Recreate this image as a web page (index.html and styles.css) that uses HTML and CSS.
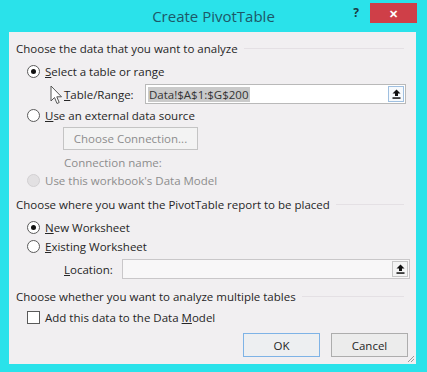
FILE: index.html
```html
<html lang="en">
<head>
  <meta charset="UTF-8" />
  <title>Create PivotTable</title>
  <link rel="stylesheet" href="styles.css">
</head>
<body>
  <div class="titlebar">
    <div></div>
    <div class="title">Create PivotTable</div>
    <div class="title-tools">
      <span class="help">?</span>
      <span class="close">&#x2715;</span>
    </div>
  </div>

  <div class="panel">
    <div class="group-label row-l1">Choose the data that you want to analyze</div>

    <div class="row radio-row r-select">
      <span class="radio checked"></span><span><u>S</u>elect a table or range</span>
    </div>
    <div class="row indent r-range">
      <span class="field-label"><u>T</u>able/Range:</span>
      <div class="field field-range">
        <span class="selected-text">Data!$A$1:$G$200</span>
        <span class="pick pick-hover"><svg width="9" height="10" viewBox="0 0 9 10"><path d="M4.5 0.5 L8.5 4.5 L6 4.5 L6 7 L3 7 L3 4.5 L0.5 4.5 Z" fill="#111"/><rect x="0.5" y="8.3" width="8" height="1.5" fill="#111"/></svg></span>
      </div>
    </div>
    <div class="row radio-row r-external">
      <span class="radio"></span><span><u>U</u>se an external data source</span>
    </div>
    <div class="row indent r-conn">
      <div class="btn btn-disabled">Choose Connection...</div>
    </div>
    <div class="row indent disabled r-connname">Connection name:</div>
    <div class="row radio-row disabled r-model">
      <span class="radio radio-disabled"></span><span>Use this workbook's Data Model</span>
    </div>

    <div class="group-label row-l2">Choose where you want the PivotTable report to be placed</div>

    <div class="row radio-row r-new">
      <span class="radio checked"></span><span><u>N</u>ew Worksheet</span>
    </div>
    <div class="row radio-row r-existing">
      <span class="radio"></span><span><u>E</u>xisting Worksheet</span>
    </div>
    <div class="row indent r-location">
      <span class="field-label"><u>L</u>ocation:</span>
      <div class="field field-location">
        <span class="pick"><svg width="9" height="10" viewBox="0 0 9 10"><path d="M4.5 0.5 L8.5 4.5 L6 4.5 L6 7 L3 7 L3 4.5 L0.5 4.5 Z" fill="#111"/><rect x="0.5" y="8.3" width="8" height="1.5" fill="#111"/></svg></span>
      </div>
    </div>

    <div class="group-label row-l3">Choose whether you want to analyze multiple tables</div>

    <div class="row radio-row r-check">
      <span class="checkbox"></span><span>Add this data to the Data <u>M</u>odel</span>
    </div>

    <div class="buttons">
      <div class="btn btn-default">OK</div>
      <div class="btn">Cancel</div>
    </div>

    <svg class="cursor" width="13" height="20" viewBox="0 0 13 20">
      <path d="M1 1 L1 16 L4.5 12.5 L7 18.5 L9.2 17.5 L6.8 11.8 L11.5 11.8 Z" fill="#fff" stroke="#555" stroke-width="1"/>
    </svg>
    <svg class="grip" width="9" height="9" viewBox="0 0 9 9">
      <path d="M8 2 L2 8 M8 5 L5 8" stroke="#9a9a9a" stroke-width="1"/>
    </svg>
  </div>
</body>
</html>
```

FILE: styles.css
```css
body {
  margin: 0;
  width: 427px;
  height: 372px;
  background: #2ae2ea;
  font-family: 'Open Sans', 'Noto Sans', sans-serif;
  font-size: 11.5px;
  color: #262626;
  overflow: hidden;
}
.titlebar {
  display: grid;
  grid-template-columns: 1fr auto 1fr;
  align-items: start;
  height: 32px;
}
.title {
  font-size: 15px;
  color: #1d5868;
  padding-top: 6px;
}
.title-tools {
  display: flex;
  justify-content: flex-end;
  align-items: flex-start;
  padding: 3px 10px 0 0;
}
.help {
  font-weight: bold;
  font-size: 12px;
  color: #1a3a44;
  margin: 1px 11px 0 0;
}
.close {
  width: 47px;
  height: 20px;
  background: #cf3f48;
  color: #fff;
  font-size: 11px;
  font-weight: bold;
  display: flex;
  align-items: center;
  justify-content: center;
}
.panel {
  position: relative;
  margin: 0 11px 0 9px;
  height: 332px;
  background: #f1eff1;
  padding: 8px 0 0 7px;
  box-sizing: border-box;
  display: flex;
  flex-direction: column;
}
.group-label {
  display: flex;
  align-items: center;
  height: 16px;
  padding-right: 12px;
}
.group-label::after {
  content: "";
  flex: 1;
  border-top: 1px solid #e4e0e4;
  margin-left: 6px;
}
.row {
  display: flex;
  align-items: center;
  height: 18px;
}
.radio-row {
  padding-left: 11px;
  gap: 5px;
}
.indent {
  padding-left: 48px;
}
.disabled {
  color: #8d8d8d;
}
.radio {
  width: 11px;
  height: 11px;
  border: 1px solid #5a5a5a;
  border-radius: 50%;
  background: #fff;
  display: flex;
  align-items: center;
  justify-content: center;
}
.radio.checked::after {
  content: "";
  width: 5px;
  height: 5px;
  border-radius: 50%;
  background: #111;
}
.radio-disabled {
  background: #e2e0e2;
  border-color: #d2d0d2;
}
.checkbox {
  width: 11px;
  height: 11px;
  border: 1px solid #5a5a5a;
  background: #fff;
}
.field-label {
  width: 81px;
}
.field {
  height: 20px;
  box-sizing: border-box;
  border: 1px solid #b9b9b9;
  background: #fff;
  display: flex;
  align-items: center;
  padding: 0 1px 0 2px;
}
.field-range {
  width: 261px;
}
.field-location {
  width: 288px;
  margin-left: -23px;
  border-color: #c9c7c9;
  background: #f8f7f8;
}
.selected-text {
  background: #cacaca;
  color: #333;
  padding: 0 1px;
}
.pick {
  margin-left: auto;
  width: 16px;
  height: 16px;
  box-sizing: border-box;
  display: flex;
  align-items: center;
  justify-content: center;
  background: #f4f4f4;
  border: 1px solid #c6c6c6;
}
.pick-hover {
  border-color: #9fbfe0;
  background: #f6f9fc;
}
.btn {
  width: 77px;
  height: 24px;
  box-sizing: border-box;
  border: 1px solid #adadad;
  background: #ececec;
  display: flex;
  align-items: center;
  justify-content: center;
}
.btn-disabled {
  width: 135px;
  height: 23px;
  color: #8d8d8d;
  border-color: #c4c4c4;
  background: #f3f3f3;
}
.btn-default {
  border-color: #7eb3e6;
  background: #edeff1;
}
.buttons {
  display: flex;
  justify-content: flex-end;
  gap: 11px;
  padding-right: 8px;
  margin-top: 7px;
}
.row-l1 { margin-top: 0; }
.r-select { margin-top: 6px; }
.r-range { margin-top: 4px; height: 20px; }
.r-external { margin-top: 2px; }
.r-conn { margin-top: 3px; height: 23px; padding-left: 47px; }
.r-connname { margin-top: 4px; height: 16px; }
.r-model { margin-top: 1px; }
.row-l2 { margin-top: 7px; }
.r-new { margin-top: 6px; }
.r-existing { margin-top: 1px; }
.r-location { margin-top: 4px; height: 20px; }
.row-l3 { margin-top: 9px; }
.r-check { margin-top: 4px; }
.cursor {
  position: absolute;
  left: 41px;
  top: 53px;
}
.grip {
  position: absolute;
  right: 1px;
  bottom: 1px;
}
```
